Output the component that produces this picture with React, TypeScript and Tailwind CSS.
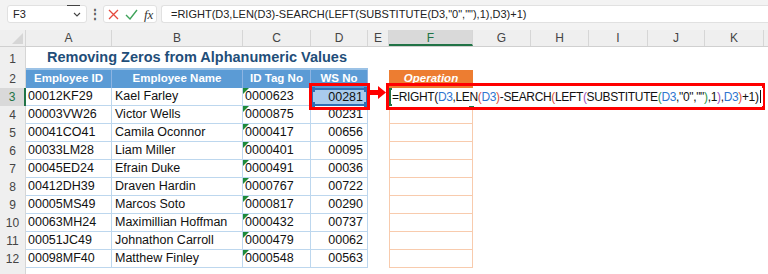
import React from "react";

const cols = [
  { key: "A", w: 86 },
  { key: "B", w: 131 },
  { key: "C", w: 68 },
  { key: "D", w: 57 },
  { key: "E", w: 21 },
  { key: "F", w: 84 },
  { key: "G", w: 58 },
  { key: "H", w: 58 },
  { key: "I", w: 59 },
  { key: "J", w: 57 },
  { key: "K", w: 59 },
];

const rows = [
  ["00012KF29", "Kael Farley", "0000623", "00281"],
  ["00003VW26", "Victor Wells", "0000875", "00231"],
  ["00041CO41", "Camila Oconnor", "0000417", "00656"],
  ["00033LM28", "Liam Miller", "0000401", "00095"],
  ["00045ED24", "Efrain Duke", "0000491", "00036"],
  ["00412DH39", "Draven Hardin", "0000767", "00722"],
  ["00005MS49", "Marcos Soto", "0000817", "00290"],
  ["00063MH24", "Maximillian Hoffman", "0000432", "00737"],
  ["00051JC49", "Johnathon Carroll", "0000479", "00062"],
  ["00098MF40", "Matthew Finley", "0000548", "00563"],
];

const font = { fontFamily: '"Liberation Sans", Arial, sans-serif' };

function Formula() {
  const b = "text-[#2e75d0]";
  const o = "text-[#e0503a]";
  const p = "text-[#9c4fc0]";
  const g = "text-[#2f9a4a]";
  return (
    <>
      =RIGHT(<span className={b}>D3</span>,LEN<span className={o}>(</span>
      <span className={b}>D3</span>
      <span className={o}>)</span>-SEARCH<span className={o}>(</span>LEFT
      <span className={p}>(</span>SUBSTITUTE<span className={g}>(</span>
      <span className={b}>D3</span>,"0",""<span className={g}>)</span>,1
      <span className={p}>)</span>,<span className={b}>D3</span>
      <span className={o}>)</span>+1)
    </>
  );
}

function Toolbar() {
  return (
    <div className="flex h-[30px] items-start gap-[4px] bg-[#f3f3f3] pl-[7px] pt-[5px]">
      <div className="relative flex h-[18px] w-[80px] items-center justify-between rounded-[3px] border border-[#e1e1e1] bg-white pl-[5px] pr-[4px] text-[11px] text-[#222]">
        <span>F3</span>
        <span className="absolute right-[6px] top-[-1px] h-[1px] w-[13px] bg-[#444]" />
        <svg width="10" height="10" viewBox="0 0 10 10">
          <path d="M2 4l3 3 3-3" fill="none" stroke="#444" strokeWidth="1.1" />
        </svg>
      </div>
      <div className="flex h-[18px] w-[8px] items-center justify-center text-[12px] font-bold leading-none text-[#555]">
        ⋮
      </div>
      <div className="flex h-[18px] w-[54px] items-center gap-[6px] rounded-[3px] border border-[#e1e1e1] bg-white pl-[4px]">
        <svg width="11" height="11" viewBox="0 0 11 11">
          <path d="M1 1l9 9M10 1l-9 9" stroke="#e5493d" strokeWidth="1.3" />
        </svg>
        <svg width="13" height="11" viewBox="0 0 13 11">
          <path d="M1 6l4 4 7-9" fill="none" stroke="#3fa35a" strokeWidth="1.4" />
        </svg>
        <span
          className="text-[13px] italic leading-none text-[#333]"
          style={{ fontFamily: '"Liberation Serif", serif' }}
        >
          fx
        </span>
      </div>
      <div className="flex h-[18px] flex-1 items-center rounded-l-[3px] border border-r-0 border-[#e1e1e1] bg-white pl-[9px] text-[11px] text-[#222]">
        =RIGHT(D3,LEN(D3)-SEARCH(LEFT(SUBSTITUTE(D3,"0",""),1),D3)+1)
      </div>
    </div>
  );
}

function ColumnHeader() {
  return (
    <div className="flex h-[17px] border-b border-[#d0d0d0] bg-[#efefef] text-[12px] text-[#444]">
      <div className="relative w-[26px] shrink-0 border-r border-[#d6d6d6]">
        <svg className="absolute bottom-[2px] right-[2px]" width="11" height="11" viewBox="0 0 11 11">
          <path d="M11 0v11H0z" fill="#d6d6d6" />
        </svg>
      </div>
      {cols.map((c) => (
        <div
          key={c.key}
          style={{ width: c.w }}
          className={
            c.key === "F"
              ? "flex shrink-0 items-center justify-center border-b-2 border-r border-b-[#217346] border-r-[#d6d6d6] bg-[#d9d9d9] pt-[2px] text-[#217346]"
              : "flex shrink-0 items-center justify-center border-r border-[#d6d6d6]"
          }
        >
          {c.key}
        </div>
      ))}
      <div className="flex-1" />
    </div>
  );
}

function RowNum({ n, h, active }: { n?: number; h: string; active?: boolean }) {
  return (
    <div
      className={
        active
          ? `flex w-[26px] shrink-0 items-center justify-center border-r-2 border-[#217346] bg-[#d9d9d9] text-[12px] text-[#217346] ${h}`
          : `flex w-[26px] shrink-0 items-center justify-center border-r border-[#d6d6d6] bg-[#efefef] text-[12px] text-[#444] ${h}`
      }
    >
      {n}
    </div>
  );
}

function Tri() {
  return (
    <svg className="absolute left-0 top-0" width="6" height="6" viewBox="0 0 6 6">
      <path d="M0 0h6L0 6z" fill="#1e8a3a" />
    </svg>
  );
}

export default function App() {
  return (
    <div className="relative h-[274px] w-[768px] overflow-hidden bg-white" style={font}>
      <Toolbar />
      <ColumnHeader />

      {/* row 1 */}
      <div className="flex h-[23px]">
        <RowNum n={1} h="h-[23px]" />
        <div className="flex w-[342px] shrink-0 items-center justify-center border-b-2 border-[#9bc2e6] text-[14.5px] font-bold text-[#1f4e79]">
          Removing Zeros from Alphanumeric Values
        </div>
      </div>

      {/* row 2 */}
      <div className="flex h-[18px]">
        <RowNum n={2} h="h-[18px]" />
        {["Employee ID", "Employee Name", "ID Tag No", "WS No"].map((t, i) => (
          <div
            key={t}
            style={{ width: cols[i].w }}
            className="flex shrink-0 items-center justify-center border-r border-[#8db4e2] bg-[#5b9bd5] text-[11.5px] font-bold text-white"
          >
            {t}
          </div>
        ))}
        <div className="w-[21px] shrink-0" />
        <div className="flex w-[84px] shrink-0 items-center justify-center bg-[#ed7d31] text-[11.5px] font-bold italic text-white">
          Operation
        </div>
      </div>

      {rows.map((r, i) => {
        const n = i + 3;
        const sel = n === 3;
        return (
          <div key={n} className="flex h-[18px] text-[12.5px] text-[#111]">
            <RowNum n={n} h="h-[18px]" active={sel} />
            <div className="flex w-[86px] shrink-0 items-center border-b border-r border-[#bdd7ee] pl-[2px]">{r[0]}</div>
            <div className="flex w-[131px] shrink-0 items-center border-b border-r border-[#bdd7ee] pl-[3px]">{r[1]}</div>
            <div className="relative flex w-[68px] shrink-0 items-center border-b border-r border-[#bdd7ee] pl-[2px]">
              <Tri />
              {r[2]}
            </div>
            <div
              className={
                sel
                  ? "relative flex w-[57px] shrink-0 items-center justify-end border-2 border-[#2f6fb5] bg-[#a9cbec] pr-[3px]"
                  : "flex w-[57px] shrink-0 items-center justify-end border-b border-r border-[#bdd7ee] pr-[4px]"
              }
            >
              {sel && (
                <>
                  <span className="absolute left-[-3px] top-[-3px] h-[5px] w-[5px] bg-[#2f6fb5]" />
                  <span className="absolute right-[-3px] top-[-3px] h-[5px] w-[5px] bg-[#2f6fb5]" />
                  <span className="absolute bottom-[-3px] left-[-3px] h-[5px] w-[5px] bg-[#2f6fb5]" />
                  <span className="absolute bottom-[-3px] right-[-3px] h-[5px] w-[5px] bg-[#2f6fb5]" />
                </>
              )}
              {r[3]}
            </div>
            <div className="w-[21px] shrink-0" />
            <div
              className={
                sel
                  ? "relative flex w-[84px] shrink-0 items-center border-2 border-[#217346] bg-white pl-[1px]"
                  : "w-[84px] shrink-0 border-b border-l border-r border-[#f8cbad]"
              }
            >
              {sel && (
                <>
                  <span className="relative z-10 whitespace-nowrap bg-white pr-[2px] text-[12px] tracking-[-0.35px] text-[#111]">
                    <Formula />
                    <span className="ml-[1px] inline-block h-[13px] w-[1px] translate-y-[2px] bg-[#111]" />
                  </span>
                  <span className="absolute bottom-[-3px] right-[-3px] h-[5px] w-[5px] bg-[#217346]" />
                </>
              )}
            </div>
          </div>
        );
      })}

      <div className="flex h-[6px]">
        <RowNum h="h-[6px]" />
      </div>

      {/* annotations */}
      <div className="absolute left-[309px] top-[83px] h-[27px] w-[61px] border-[3px] border-[#ff0000]" />
      <svg className="absolute left-[369px] top-[85px]" width="18" height="15" viewBox="0 0 18 15">
        <path d="M0 5h9V1l8 6.5-8 6.5V10H0z" fill="#ff0000" />
      </svg>
      <div className="absolute left-[386px] top-[83px] h-[27px] w-[379px] border-[3px] border-[#ff0000]" />
    </div>
  );
}
